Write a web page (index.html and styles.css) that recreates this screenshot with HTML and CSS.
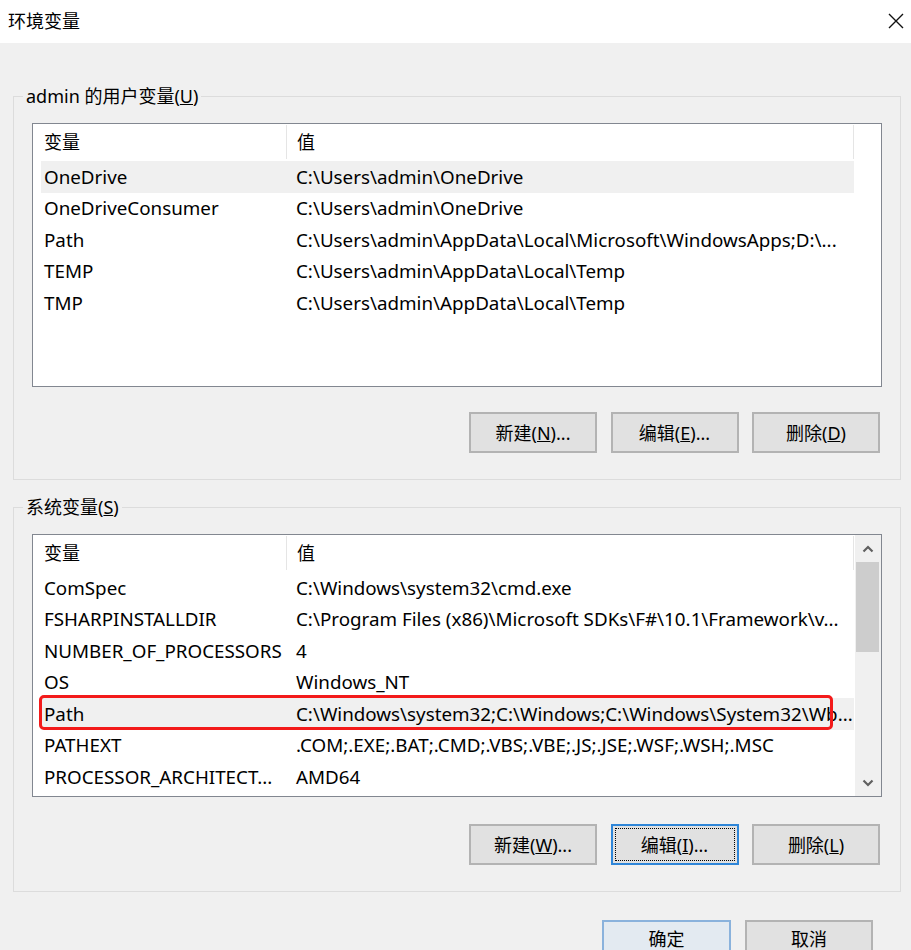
FILE: index.html
```html
<!DOCTYPE html>
<html lang="zh-CN">
<head>
<meta charset="utf-8">
<title>环境变量</title>
<link rel="stylesheet" href="styles.css">
</head>
<body>
<div class="window">
  <div class="titlebar">
    <span class="title">环境变量</span>
    <svg class="close" width="16" height="16" viewBox="0 0 16 16"><path d="M1 1 L15 15 M15 1 L1 15" stroke="#111" stroke-width="1.4" fill="none"/></svg>
  </div>
  <div class="content">
    <fieldset class="group">
      <legend>admin 的用户变量(<u>U</u>)</legend>
      <div class="list">
        <div class="table">
          <div class="row head"><div class="c1">变量</div><div class="c2">值</div></div>
          <div class="row sel"><div class="c1">OneDrive</div><div class="c2">C:\Users\admin\OneDrive</div></div>
          <div class="row"><div class="c1">OneDriveConsumer</div><div class="c2">C:\Users\admin\OneDrive</div></div>
          <div class="row"><div class="c1">Path</div><div class="c2">C:\Users\admin\AppData\Local\Microsoft\WindowsApps;D:\...</div></div>
          <div class="row"><div class="c1">TEMP</div><div class="c2">C:\Users\admin\AppData\Local\Temp</div></div>
          <div class="row"><div class="c1">TMP</div><div class="c2">C:\Users\admin\AppData\Local\Temp</div></div>
        </div>
      </div>
      <div class="btns">
        <div class="btn">新建(<u>N</u>)...</div>
        <div class="btn">编辑(<u>E</u>)...</div>
        <div class="btn">删除(<u>D</u>)</div>
      </div>
    </fieldset>

    <fieldset class="group group2">
      <legend>系统变量(<u>S</u>)</legend>
      <div class="list">
        <div class="table">
          <div class="row head"><div class="c1">变量</div><div class="c2">值</div></div>
          <div class="row"><div class="c1">ComSpec</div><div class="c2">C:\Windows\system32\cmd.exe</div></div>
          <div class="row"><div class="c1">FSHARPINSTALLDIR</div><div class="c2">C:\Program Files (x86)\Microsoft SDKs\F#\10.1\Framework\v...</div></div>
          <div class="row"><div class="c1">NUMBER_OF_PROCESSORS</div><div class="c2">4</div></div>
          <div class="row"><div class="c1">OS</div><div class="c2">Windows_NT</div></div>
          <div class="row sel path-row"><div class="c1">Path</div><div class="c2">C:\Windows\system32;C:\Windows;C:\Windows\System32\Wb...</div><span class="mark"></span></div>
          <div class="row"><div class="c1">PATHEXT</div><div class="c2">.COM;.EXE;.BAT;.CMD;.VBS;.VBE;.JS;.JSE;.WSF;.WSH;.MSC</div></div>
          <div class="row"><div class="c1">PROCESSOR_ARCHITECT...</div><div class="c2">AMD64</div></div>
        </div>
        <div class="scroll">
          <div class="arrow"><svg width="12" height="8" viewBox="0 0 12 8"><polyline points="1.5,6.5 6,2 10.5,6.5" fill="none" stroke="#606060" stroke-width="2.2"/></svg></div>
          <div class="thumb"></div>
          <div class="arrow down"><svg width="12" height="8" viewBox="0 0 12 8"><polyline points="1.5,1.5 6,6 10.5,1.5" fill="none" stroke="#606060" stroke-width="2.2"/></svg></div>
        </div>
      </div>
      <div class="btns">
        <div class="btn">新建(<u>W</u>)...</div>
        <div class="btn focus">编辑(<u>I</u>)...</div>
        <div class="btn">删除(<u>L</u>)</div>
      </div>
    </fieldset>

    <div class="dialog-btns">
      <div class="btn ok">确定</div>
      <div class="btn cancel">取消</div>
    </div>
  </div>
</div>
</body>
</html>
```

FILE: styles.css
```css
html, body {
  margin: 0;
  padding: 0;
}
body {
  width: 911px;
  height: 950px;
  overflow: hidden;
  font-family: "Noto Sans", "Noto Sans CJK SC", sans-serif;
  font-size: 18px;
  color: #000;
  background: #f0f0f0;
}
.window {
  width: 911px;
  height: 950px;
  display: flex;
  flex-direction: column;
}
.titlebar {
  height: 43px;
  flex: none;
  background: #fff;
  display: flex;
  align-items: center;
  justify-content: space-between;
  padding: 0 7px 2px 8px;
  box-sizing: border-box;
}
.title {
  font-size: 18px;
  line-height: 24px;
}
.close {
  display: block;
}
.content {
  flex: 1;
  background: #f0f0f0;
  padding: 41px 10px 0 13px;
  box-sizing: border-box;
  position: relative;
  overflow: hidden;
}
.group {
  margin: 0;
  padding: 15px 18px 26px;
  border: 1px solid #dcdcdc;
  width: 888px;
  min-width: 0;
  box-sizing: border-box;
}
.group2 {
  margin-top: 15px;
}
legend {
  padding: 0 3px;
  margin-left: -9px;
  line-height: 24px;
  font-size: 18px;
}
.list {
  height: 264px;
  border: 1px solid #828790;
  background: #fff;
  box-sizing: border-box;
  display: flex;
}
.group2 .list {
  height: 263px;
}
.table {
  margin-left: 8px;
  width: 813px;
  flex: none;
}
.row {
  display: flex;
  align-items: center;
  height: 31.5px;
  white-space: nowrap;
  line-height: 24px;
  font-size: 18.8px;
}
.row.head {
  height: 37px;
  font-size: 18px;
}
.c1 {
  width: 245px;
  flex: none;
  padding-left: 3px;
  box-sizing: border-box;
  overflow: hidden;
}
.c2 {
  width: 568px;
  flex: none;
  padding-left: 10px;
  box-sizing: border-box;
  overflow: hidden;
}
.head .c1,
.head .c2 {
  align-self: stretch;
  display: flex;
  align-items: center;
  margin: 1px 0 2px;
}
.head .c2 {
  border-left: 1px solid #e5e5e5;
  border-right: 1px solid #e5e5e5;
}
.sel {
  background: #f0f0f0;
}
.path-row {
  position: relative;
}
.mark {
  position: absolute;
  left: -2px;
  top: -3px;
  width: 794px;
  height: 35px;
  border: 3px solid #f31a1a;
  border-radius: 5px;
  box-sizing: border-box;
}
.scroll {
  width: 26px;
  margin-left: 1px;
  background: #f0f0f0;
  display: flex;
  flex-direction: column;
}
.arrow {
  height: 27px;
  display: flex;
  align-items: center;
  justify-content: center;
  flex: none;
}
.arrow.down {
  margin-top: auto;
}
.thumb {
  height: 90px;
  margin: 0 2px 0 1px;
  background: #cdcdcd;
  flex: none;
}
.btns {
  display: flex;
  justify-content: flex-end;
  gap: 13.5px;
  margin-top: 25px;
  padding-right: 2px;
}
.group2 .btns {
  margin-top: 27px;
}
.btn {
  width: 128px;
  height: 41px;
  border: 2px solid #b3b3b3;
  background: #e1e1e1;
  box-sizing: border-box;
  display: flex;
  align-items: center;
  justify-content: center;
  font-size: 18px;
  line-height: 24px;
  white-space: nowrap;
}
.btn.focus {
  border-color: #2f86d8;
  position: relative;
}
.btn.focus::after {
  content: "";
  position: absolute;
  inset: 2px;
  border: 1px dotted #000;
}
.dialog-btns {
  display: flex;
  justify-content: flex-end;
  gap: 14px;
  margin-top: 28px;
  padding-right: 28px;
}
.dialog-btns .btn {
  padding-bottom: 3px;
}
.btn.ok {
  width: 129px;
  border-color: #8ab2dc;
  background: #e3eaf1;
}
```
